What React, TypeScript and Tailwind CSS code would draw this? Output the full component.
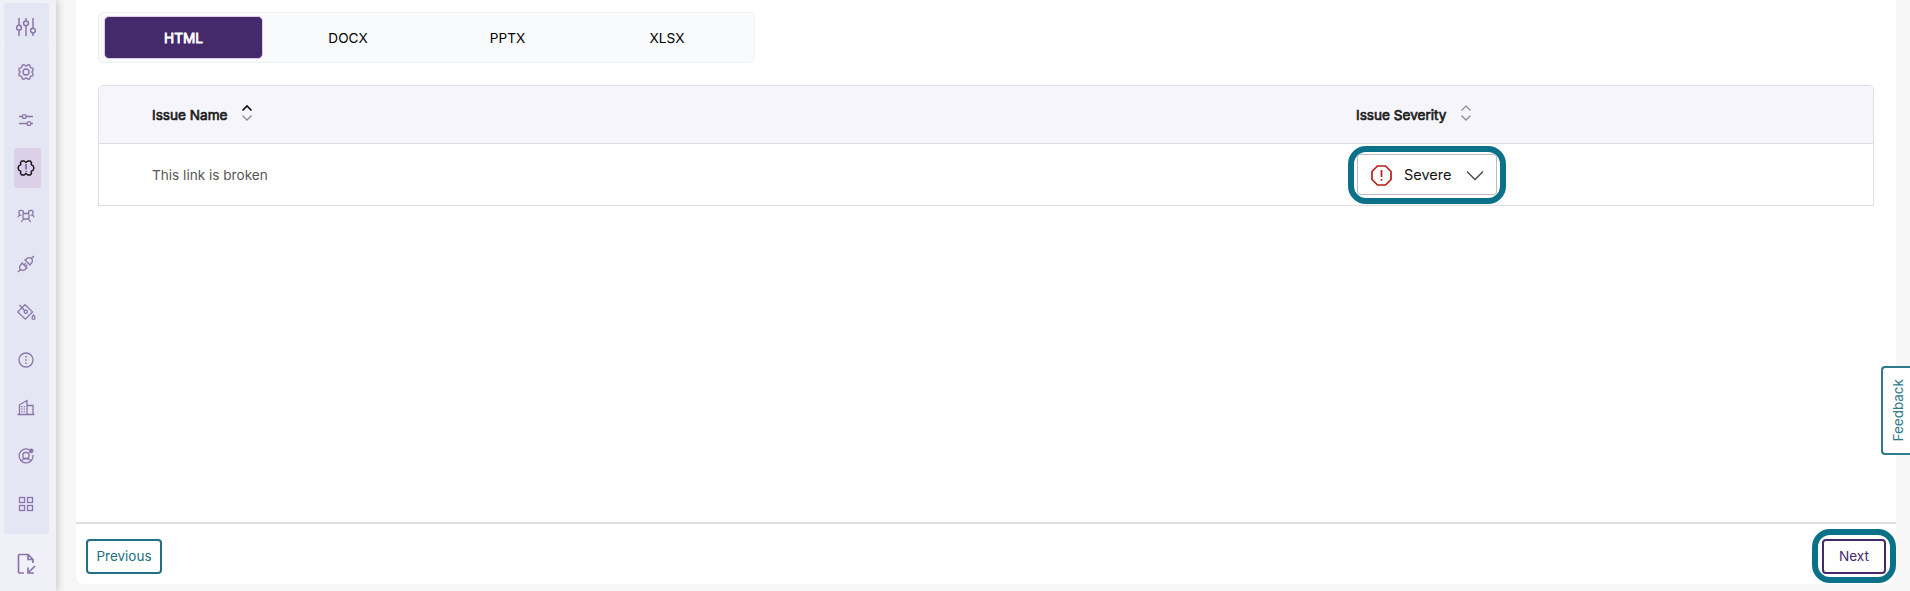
import type { ReactNode } from "react";

const icons: { name: string; art: ReactNode; active?: boolean }[] = [
  {
    name: "Settings",
    art: (
      <>
        <path strokeLinejoin="round" d="M11 5.200 12.500 4h2.200l.7 2.600L18 7.300v2.200L16.800 11l1.200 1.500v2.200l-2.600.7-.7 2.600h-2.200L11 16.800 9.500 18H7.300l-.7-2.600-2.600-.7v-2.200L5.200 11 4 9.500V7.300l2.600-.7.7-2.600h2.200z" />
        <circle cx="11" cy="11" r="3" />
      </>
    ),
  },
  {
    name: "Filters",
    art: (
      <>
        <path d="M4 7.500h3.200M11 7.500h7M4 14.500h8M16 14.500h2" />
        <circle cx="9.200" cy="7.500" r="1.900" />
        <circle cx="14" cy="14.500" r="1.900" />
      </>
    ),
  },
  {
    name: "Issues",
    active: true,
    art: (
      <>
        <path strokeLinejoin="round" strokeWidth="1.400" d="m11 5.500 1.800-1.500h2.400l1.300 1.500-.3 2.200 2 1.200.7 2.100-.7 2.100-2 1.200.3 2.200-1.300 1.500h-2.400L11 16.500 9.200 18H6.800l-1.300-1.500.3-2.200-2-1.200L3.100 11l.7-2.100 2-1.200-.3-2.200L6.800 4h2.400z" />
        <path d="M11 7v5.500M11 14v1.300" stroke="#765591" strokeWidth="1.500" />
      </>
    ),
  },
  {
    name: "Users",
    art: (
      <>
        <rect x="8" y="8.500" width="6" height="5.500" rx="1.300" />
        <path d="M6.500 17.200c.3-1.700 1.200-2.700 2.500-3.200M15.500 17.200c-.3-1.700-1.200-2.700-2.500-3.200M8.300 8.300V6.300c-.5-1.300-3.800-1.300-4.300 0v1.900c0 1 .4 1.600 1.200 2-1.500.3-2.200 1-2.400 2.300M13.700 8.300V6.300c.5-1.300 3.800-1.300 4.300 0v1.900c0 1-.4 1.600-1.200 2 1.500.3 2.200 1 2.400 2.300" />
      </>
    ),
  },
  {
    name: "Integrations",
    art: (
      <path d="m3 19 2.500-2.500M19 3l-2.500 2.500M6.500 9.500l6 6M9.500 6.500l6 6M7.200 10.300l-1.700 1.700a3 3 0 0 0 4.500 4.500l1.700-1.700M10.300 7.200l1.700-1.700a3 3 0 0 1 4.500 4.500l-1.700 1.700M9 12l1.700-1.700M10.500 13.500l1.700-1.700" />
    ),
  },
  {
    name: "Theme",
    art: (
      <>
        <path d="m10 3.700 7.500 7.200-7.200 7.300-7.500-7.300zM4.500 4l5 5.500" />
        <circle cx="10.800" cy="10.700" r="1.600" />
        <path d="M18.500 14c1 1.300 1.500 2.100 1.500 2.900a1.500 1.500 0 0 1-3 0c0-.8.500-1.600 1.500-2.900z" />
      </>
    ),
  },
  {
    name: "Information",
    art: (
      <>
        <circle cx="11" cy="11" r="7" />
        <path d="M11 7v1.600M11 10.200v1.600M11 13.500V15" strokeWidth="1.600" />
      </>
    ),
  },
  {
    name: "Organization",
    art: (
      <path d="M2.500 17.500h17M4.500 17.500V7.800L12 3.500v14M12 8.500h6v9M6.800 9v1.200M9.300 9v1.200M6.800 11.500v1.200M9.300 11.500v1.200M6.800 14v1.200M9.300 14v1.200" />
    ),
  },
  {
    name: "Account",
    art: (
      <>
        <path d="M14 4.600A7 7 0 1 0 18 10M6 15.800c1.200-1.600 2.800-2.300 5-2.300s3.800.7 5 2.300" />
        <rect x="8" y="7.500" width="6" height="6" rx="2.200" />
        <circle cx="16.200" cy="5.800" r="1.700" fill="currentColor" />
      </>
    ),
  },
  {
    name: "Apps",
    art: (
      <>
        <rect x="4.500" y="4.500" width="5" height="5" />
        <rect x="12.500" y="4.500" width="5" height="5" />
        <rect x="4.500" y="12.500" width="5" height="5" />
        <rect x="12.500" y="12.500" width="5" height="5" />
      </>
    ),
  },
];

function Sidebar() {
  return (
    <aside className="flex w-14 shrink-0 flex-col bg-[#f0f1f8] pt-[3px] pl-1 text-[#8a75a9] shadow-[1px_0_8px_rgba(0,0,0,0.22)]">
      <div className="flex h-[39px] w-[45px] rounded-[3px] bg-[#e4e6f3] pt-[14px] pl-3">
        <svg width="20" height="20" viewBox="0 0 20 20" fill="none" stroke="currentColor" strokeWidth="1.500">
          <path d="M3 1v7M3 13v6M10 1v3M10 9v10M17 1v10M17 16v3" />
          <circle cx="3" cy="10.700" r="2.400" />
          <circle cx="10" cy="6.300" r="2.400" />
          <circle cx="17" cy="13.600" r="2.400" />
        </svg>
      </div>
      <nav className="flex h-[492px] w-[45px] flex-col gap-2 rounded-[3px] bg-[#e4e6f3] pt-[10px] pl-[10px]">
        {icons.map((icon) => (
          <a
            key={icon.name}
            aria-label={icon.name}
            className={
              icon.active
                ? "flex h-10 w-[27px] shrink-0 items-center rounded-[3px] bg-[#dbd0e8] pl-px text-[#17131c]"
                : "flex h-10 w-[27px] shrink-0 items-center pl-px"
            }
          >
            <svg className="shrink-0" width="22" height="22" viewBox="0 0 22 22" fill="none" stroke="currentColor" strokeWidth="1.300">
              {icon.art}
            </svg>
          </a>
        ))}
      </nav>
      <div className="flex w-[45px] pt-[19px] pl-3">
        <svg width="20" height="22" viewBox="0 0 20 22" fill="none" stroke="currentColor" strokeWidth="1.700">
          <path d="M8 20H3.500a1 1 0 0 1-1-1V2.500a1 1 0 0 1 1-1H12l5 5V10M12 1.500v5h5M19 13l-7 7M12 14.500V20h6" />
        </svg>
      </div>
    </aside>
  );
}

function SortIcon({ ascending = false }: { ascending?: boolean }) {
  return (
    <svg className="mb-0.5 shrink-0" width="12" height="18" viewBox="0 0 12 18" fill="none" strokeWidth="1.300">
      <path d="m1.500 6.500 4.500-4.500L10.500 6.500" stroke={ascending ? "#111" : "#8b8b8f"} strokeWidth={ascending ? 1.7 : 1.2} />
      <path d="m1.500 11.500 4.500 4.500 4.500-4.500" stroke="#8b8b8f" />
    </svg>
  );
}

export default function App() {
  return (
    <div className="relative flex h-[591px] w-full overflow-hidden bg-[#f6f6f6] font-['Inter',sans-serif] text-[13.6px] text-black">
      <Sidebar />
      <main className="ml-5 mr-[14px] flex h-[584px] min-w-0 flex-1 flex-col rounded-b-lg bg-white">
        <div className="flex-1 pt-3 pl-[22px] pr-[22px]">
          <div className="flex h-[51px] w-[657px] items-center rounded-[5px] border border-[#edf0f4] bg-[#f9fafc] pl-[5px]">
            <button className="h-[43px] w-[159px] rounded-[5px] border border-[#dacee9] bg-[#442a6b] pt-0.5 text-white [-webkit-text-stroke:0.8px]">HTML</button>
            <button className="ml-[5px] h-[43px] w-[160px] pt-0.5">DOCX</button>
            <button className="h-[43px] w-[159px] pt-0.5">PPTX</button>
            <button className="h-[43px] w-[160px] pt-0.5">XLSX</button>
          </div>
          <section className="mt-[22px] rounded-t-[5px] border border-[#dddde3]">
            <div className="flex h-[58px] items-center rounded-t-[4px] border-b border-[#dddde3] bg-[#f6f5fb] text-[#1e1e1e]">
              <div className="flex w-[1257px] items-center pl-[53px]">
                <span className="w-[89px] pt-0.5 [-webkit-text-stroke:0.7px]">Issue Name</span>
                <SortIcon ascending />
              </div>
              <div className="flex items-center">
                <span className="w-[104px] pt-0.5 [-webkit-text-stroke:0.7px]">Issue Severity</span>
                <SortIcon />
              </div>
            </div>
            <div className="flex h-[61px] items-center">
              <div className="w-[1249px] pt-px pl-[53px] text-[#555]">This link is broken</div>
              <div className="h-[58px] w-[158px] rounded-[18px] border-[6px] border-[#0b7188] px-[3px] py-[2px]">
                <button className="flex h-[41px] w-full items-center rounded-[3px] border border-[#bdbdbd] pt-[2px] pl-[14px] text-[14.5px] text-[#111]">
                  <svg className="-ml-px" width="21" height="21" viewBox="0 0 21 21" fill="none" stroke="#b91c1c" strokeWidth="1.700">
                    <path d="M6.500 1h8L20 6.500v8L14.500 20h-8L1 14.500v-8zM10.500 5v7M10.500 14v1.800" />
                  </svg>
                  <span className="ml-3 w-[52px] text-left">Severe</span>
                  <svg className="ml-[10px]" width="18" height="11" viewBox="0 0 18 11" fill="none" stroke="#444" strokeWidth="1.300">
                    <path d="m1 1.500 8 8 8-8" />
                  </svg>
                </button>
              </div>
            </div>
          </section>
        </div>
        <footer className="flex h-[62px] items-center justify-between border-t-2 border-[#dedede] pl-[10px]">
          <button className="mt-[5px] h-[35px] w-[76px] rounded-[4px] border-2 border-[#216f83] pb-px text-[13.5px] text-[#216f83]">
            Previous
          </button>
          <div className="mt-[4px] flex h-[54px] w-[84px] items-center justify-center rounded-[18px] border-[6px] border-[#0b7188]">
            <button className="h-[35px] w-16 rounded-[4px] border-2 border-[#442a6b] text-[#442a6b]">Next</button>
          </div>
        </footer>
      </main>
      <button className="absolute top-[366px] right-0 flex h-[89px] w-[29px] items-center justify-center rounded-l-[4px] border-2 border-r-0 border-[#2f7b8e] bg-white pl-[4px] text-[13.5px] text-[#2f7b8e]">
        <span className="rotate-180 [writing-mode:vertical-rl]">Feedback</span>
      </button>
    </div>
  );
}
